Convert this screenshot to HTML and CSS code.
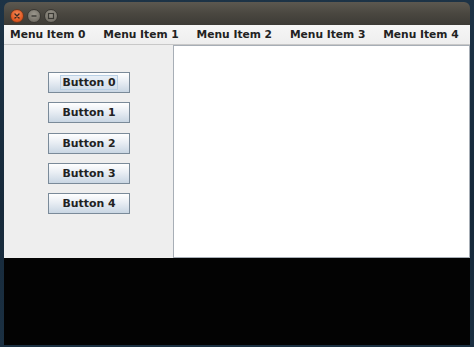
FILE: index.html
```html
<!DOCTYPE html>
<html>
<head>
<meta charset="utf-8">
<link rel="stylesheet" href="styles.css">
</head>
<body>
<div class="desktop">
  <div class="window">
    <div class="titlebar">
      <span class="wbtn close"><svg width="10" height="10" viewBox="0 0 10 10"><path d="M3 3L7 7M7 3L3 7" stroke="#3a2a20" stroke-width="1.4" stroke-linecap="round"/></svg></span>
      <span class="wbtn min"><svg width="10" height="10" viewBox="0 0 10 10"><path d="M2.5 5H7.5" stroke="#3a3934" stroke-width="1.4"/></svg></span>
      <span class="wbtn max"><svg width="10" height="10" viewBox="0 0 10 10"><rect x="2.5" y="2.5" width="5" height="5" fill="none" stroke="#3a3934" stroke-width="1.2"/></svg></span>
    </div>
    <div class="menubar">
      <span class="menuitem">Menu Item 0</span>
      <span class="menuitem">Menu Item 1</span>
      <span class="menuitem">Menu Item 2</span>
      <span class="menuitem">Menu Item 3</span>
      <span class="menuitem">Menu Item 4</span>
    </div>
    <div class="content">
      <div class="sidebar">
        <button class="jbtn focused"><span>Button 0</span></button>
        <button class="jbtn"><span>Button 1</span></button>
        <button class="jbtn"><span>Button 2</span></button>
        <button class="jbtn"><span>Button 3</span></button>
        <button class="jbtn"><span>Button 4</span></button>
      </div>
      <div class="textarea"></div>
    </div>
    <div class="blackarea"></div>
  </div>
</div>
</body>
</html>
```
FILE: styles.css
```css
html, body {
  margin: 0;
  padding: 0;
  width: 474px;
  height: 347px;
  overflow: hidden;
}
.desktop {
  width: 474px;
  height: 347px;
  background: linear-gradient(180deg, #1d3346 0%, #16293a 60%, #1b3042 100%);
  padding: 2px 4px 2px 4px;
  box-sizing: border-box;
}
.window {
  display: flex;
  flex-direction: column;
  height: 100%;
  font-family: "DejaVu Sans", sans-serif;
}
.titlebar {
  height: 23px;
  flex: none;
  border-radius: 6px 6px 0 0;
  background: linear-gradient(180deg, #5c5850 0%, #4a4740 50%, #3d3b36 100%);
  display: flex;
  align-items: center;
  padding-left: 6px;
  gap: 3px;
  box-sizing: border-box;
  padding-top: 4px;
}
.wbtn {
  width: 14px;
  height: 14px;
  border-radius: 50%;
  display: flex;
  align-items: center;
  justify-content: center;
  box-sizing: border-box;
}
.wbtn.close {
  background: radial-gradient(circle at 50% 35%, #f58a5a 0%, #e25a23 60%, #c24415 100%);
  border: 1px solid #6a3a22;
}
.wbtn.min, .wbtn.max {
  background: radial-gradient(circle at 50% 35%, #9a968c 0%, #7c786f 60%, #66625a 100%);
  border: 1px solid #3a3833;
}
.menubar {
  height: 19px;
  flex: none;
  background: linear-gradient(180deg, #f6f6f6 0%, #eeeeee 100%);
  border-bottom: 1px solid #c8c8c8;
  display: flex;
  align-items: center;
  padding-left: 6px;
}
.menuitem {
  font-size: 10.7px;
  font-weight: bold;
  color: #222;
  width: 93.3px;
  flex: none;
  white-space: nowrap;
}
.content {
  flex: none;
  height: 213px;
  display: flex;
  background: #eeeeee;
}
.sidebar {
  width: 169px;
  flex: none;
  display: flex;
  flex-direction: column;
  align-items: flex-start;
  padding: 27px 0 0 44px;
  box-sizing: border-box;
  gap: 9.25px;
}
.jbtn {
  width: 82px;
  height: 21px;
  margin: 0;
  padding: 0;
  border: 1px solid #7a8a99;
  background: linear-gradient(180deg, #ffffff 0%, #e9eef4 45%, #c9d6e3 100%);
  font-family: "DejaVu Sans", sans-serif;
  font-size: 10.9px;
  font-weight: bold;
  color: #222;
  display: flex;
  align-items: center;
  justify-content: center;
}
.jbtn.focused span {
  outline: 1px solid #b8cfe5;
  background: rgba(210,225,240,0.4);
  padding: 0 1px;
}
.textarea {
  flex: 1;
  background: #ffffff;
  border: 1px solid #a7aeb6;
  box-sizing: border-box;
}
.blackarea {
  flex: 1;
  background: #030303;
}
```
